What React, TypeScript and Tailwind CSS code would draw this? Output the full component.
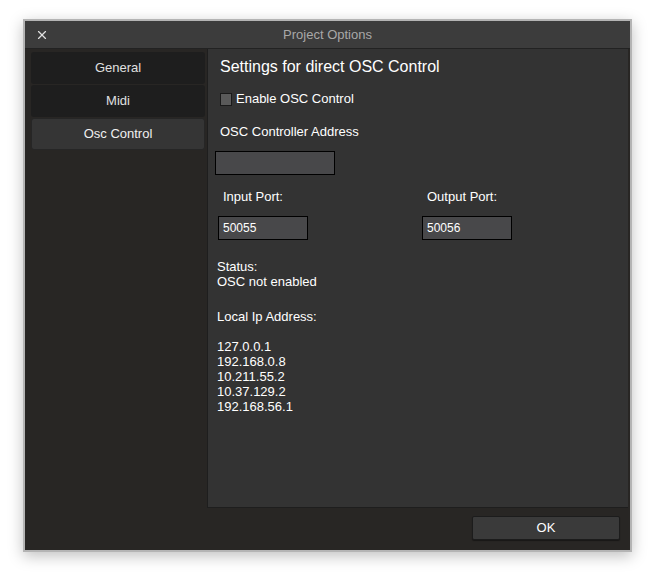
import { X } from 'lucide-react'

const ips = ['127.0.0.1', '192.168.0.8', '10.211.55.2', '10.37.129.2', '192.168.56.1']

const tabs = [
  { label: 'General', active: false },
  { label: 'Midi', active: false },
  { label: 'Osc Control', active: true },
]

export default function App() {
  return (
    <div className="w-[654px] h-[580px] bg-white pt-[19px] pl-[23px]" style={{ fontFamily: '"Liberation Sans", Arial, sans-serif' }}>
      <div className="w-[609px] h-[533px] border-2 border-[#b4b4b4] bg-[#282624] flex flex-col shadow-[0_4px_14px_rgba(0,0,0,0.25)]">
        {/* title bar */}
        <div className="h-[28px] bg-[#3c3c3c] border-b border-[#222] flex items-center relative shrink-0">
          <X className="ml-[10px] w-[14px] h-[14px] text-[#e0e0e0]" strokeWidth={2} />
          <div className="absolute inset-0 flex items-center justify-center text-[13px] text-[#a8a8a8]">Project Options</div>
        </div>

        <div className="flex flex-1 min-h-0">
          {/* sidebar */}
          <div className="w-[182px] pl-[6px] pt-[3px] flex flex-col gap-[1px] shrink-0">
            {tabs.map((t) => (
              <div
                key={t.label}
                className={
                  t.active
                    ? 'w-[174px] h-[32px] rounded-[3px] bg-[#353535] border border-[#262626] flex items-center justify-center text-[13px] text-[#f0f0f0]'
                    : 'w-[174px] h-[32px] rounded-[3px] bg-[#1e1e1e] flex items-center justify-center text-[13px] text-[#e0e0e0]'
                }
              >
                {t.label}
              </div>
            ))}
          </div>

          {/* right column */}
          <div className="flex-1 flex flex-col pr-[2px]">
            <div className="h-[459px] bg-[#333333] border-l border-b border-[#1e1e1e] pl-[12px] text-white text-[13px]">
              <div className="pt-[8px] text-[16px] leading-[20px]">Settings for direct OSC Control</div>
              <div className="mt-[14px] flex items-center gap-[4px] h-[16px]">
                <div className="w-[12px] h-[13px] bg-[#5a5a5a] border border-[#1a1a1a]" />
                <span>Enable OSC Control</span>
              </div>
              <div className="mt-[17px] h-[16px] leading-[16px]">OSC Controller Address</div>
              <div className="mt-[11px] -ml-[5px] w-[120px] h-[24px] bg-[#48484a] border border-black" />
              <div className="mt-[14px] flex">
                <div className="w-[204px]">
                  <div className="pl-[3px] h-[16px] leading-[16px]">Input Port:</div>
                  <div className="mt-[11px] -ml-[2px] w-[90px] h-[24px] bg-[#48484a] border border-black flex items-center pl-[4px] text-[12px]">50055</div>
                </div>
                <div>
                  <div className="pl-[3px] h-[16px] leading-[16px]">Output Port:</div>
                  <div className="mt-[11px] -ml-[2px] w-[90px] h-[24px] bg-[#48484a] border border-black flex items-center pl-[4px] text-[12px]">50056</div>
                </div>
              </div>
              <div className="mt-[19px] -ml-[3px] leading-[15px]">
                <div>Status:</div>
                <div>OSC not enabled</div>
                <div className="mt-[20px]">Local Ip Address:</div>
                <div className="mt-[15px]">
                  {ips.map((ip) => (
                    <div key={ip}>{ip}</div>
                  ))}
                </div>
              </div>
            </div>
            <div className="flex justify-end pr-[8px] pt-[8px]">
              <button className="w-[148px] h-[24px] bg-[#3a3a3a] border border-[#1c1c1c] rounded-[2px] text-white text-[13px] shadow-[0_1px_1px_rgba(0,0,0,0.4)]">
                OK
              </button>
            </div>
          </div>
        </div>
      </div>
    </div>
  )
}
